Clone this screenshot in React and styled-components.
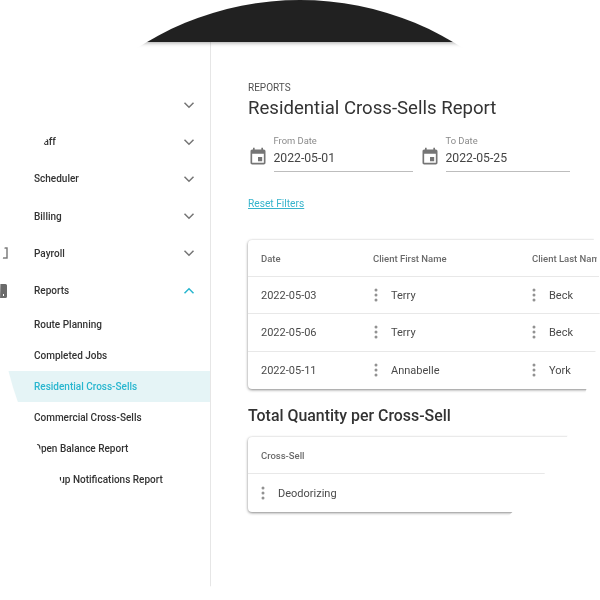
import React from "react";
import styled, { createGlobalStyle } from "styled-components";

const Global = createGlobalStyle`
  html, body { margin: 0; padding: 0; background: #fff; }
  * { box-sizing: border-box; }
  body { font-family: Roboto, "Liberation Sans", sans-serif; }
`;

const Lens = styled.div`
  width: 600px;
  height: 600px;
  overflow: hidden;
  background: #fff;
  clip-path: circle(300px at 300px 300px);
  filter: blur(0.3px);
  display: flex;
  flex-direction: column;
`;

const TopBar = styled.header`
  flex: none;
  height: 42px;
  background: #212121;
  box-shadow: 0 1px 4px rgba(0, 0, 0, 0.35);
  position: relative;
  z-index: 2;
`;

const Body = styled.div`
  flex: 1;
  display: flex;
  min-height: 0;
`;

const Sidebar = styled.nav`
  flex: none;
  width: 211px;
  border-right: 1px solid #e6e6e6;
  padding-top: 44px;
`;

const NavRow = styled.div`
  height: 37.2px;
  display: flex;
  align-items: center;
  padding-left: 34px;
  padding-right: 14px;
  font-size: 10px;
  font-weight: 500;
  color: #333;
  position: relative;
`;

const NavLabel = styled.span`
  flex: 1;
`;

const SubRow = styled.div`
  height: 31px;
  display: flex;
  align-items: center;
  padding-left: 34px;
  font-size: 10px;
  font-weight: 500;
  white-space: nowrap;
  color: ${(p) => (p.$active ? "#29b6cf" : "#333")};
  background: ${(p) => (p.$active ? "#e5f4f6" : "transparent")};
`;

const SubList = styled.div`
  padding-top: 0;
`;

const EdgeIcon = styled.svg`
  position: absolute;
  left: -11px;
  top: 50%;
  width: 18px;
  height: 18px;
  margin-top: -9px;
  overflow: visible;
  fill: ${(p) => (p.$filled ? "#6a6a6a" : "none")};
  stroke: ${(p) => (p.$filled ? "none" : "#757575")};
  stroke-width: 1.4;
`;

const Main = styled.main`
  flex: 1;
  min-width: 0;
  padding: 38px 0 0 37px;
`;

const Crumb = styled.div`
  font-size: 10px;
  line-height: 14px;
  color: #505050;
  margin-top: 0.5px;
`;

const Title = styled.h1`
  margin: 0.5px 0 0;
  font-size: 18.6px;
  line-height: 26px;
  font-weight: 400;
  color: #333;
  white-space: nowrap;
`;

const Filters = styled.div`
  display: flex;
  margin-top: 14px;
`;

const DateField = styled.div`
  display: flex;
  align-items: flex-end;
  width: ${(p) => p.$w}px;
  padding-right: ${(p) => p.$pr}px;
  flex: none;
`;

const CalIcon = styled.svg`
  flex: none;
  width: 20px;
  height: 20px;
  margin: 0 3.5px 5px 0;
  fill: #757575;
`;

const FieldBox = styled.div`
  flex: 1;
  margin-left: 2px;
  border-bottom: 1px solid #bdbdbd;
  height: 37px;
`;

const FieldLabel = styled.div`
  font-size: 9.4px;
  line-height: 13px;
  margin: -1px 0 1px;
  color: #8a8a8a;
`;

const FieldValue = styled.div`
  font-size: 12.2px;
  line-height: 20px;
  color: #444;
`;

const ResetLink = styled.a`
  display: block;
  margin-top: 25px;
  font-size: 10.2px;
  line-height: 14px;
  color: #37b4cc;
  text-decoration: underline;
`;

const Card = styled.div`
  margin-top: ${(p) => p.$mt}px;
  width: 420px;
  border-radius: 4px;
  background: #fff;
  box-shadow: 0 1px 3px rgba(0, 0, 0, 0.45), 0 0 2px rgba(0, 0, 0, 0.08);
`;

const HeadRow = styled.div`
  display: flex;
  align-items: center;
  height: 37px;
  border-bottom: 1px solid #e8e8e8;
  font-size: 9.5px;
  font-weight: 500;
  color: #6a6a6a;
`;

const Row = styled.div`
  display: flex;
  align-items: center;
  height: 37.3px;
  font-size: 11px;
  color: #4a4a4a;
  border-bottom: ${(p) => (p.$last ? "none" : "1px solid #e8e8e8")};
`;

const Cell = styled.div`
  flex: none;
  width: ${(p) => p.$w}px;
  padding-left: ${(p) => p.$pl ?? 0}px;
  display: flex;
  align-items: center;
  white-space: nowrap;
`;

const Kebab = styled.svg`
  flex: none;
  width: 4px;
  height: 14px;
  margin-right: 13px;
  margin-left: 1px;
  fill: #929292;
`;

const Section = styled.h2`
  margin: 17.5px 0 0;
  font-size: 15.9px;
  line-height: 20px;
  font-weight: 500;
  color: #333;
`;

const Chevron = ({ up }) => (
  <svg width="14" height="14" viewBox="0 0 14 14" fill="none" stroke={up ? "#29b6cf" : "#757575"} strokeWidth="1.5">
    <path d={up ? "M2.5 9.2 7 4.8l4.5 4.4" : "M2.5 4.8 7 9.2l4.5-4.4"} />
  </svg>
);

const Dots = () => (
  <Kebab viewBox="0 0 4 14">
    <circle cx="2" cy="2" r="1.5" />
    <circle cx="2" cy="7" r="1.5" />
    <circle cx="2" cy="12" r="1.5" />
  </Kebab>
);

const Calendar = () => (
  <CalIcon viewBox="0 0 24 24">
    <path d="M17 12h-5v5h5v-5zM16 1v2H8V1H6v2H5c-1.11 0-1.99.9-1.99 2L3 19c0 1.1.89 2 2 2h14c1.1 0 2-.9 2-2V5c0-1.1-.9-2-2-2h-1V1h-2zm3 18H5V8h14v11z" />
  </CalIcon>
);

const mainNav = ["Jobs", "Staff", "Scheduler", "Billing", "Payroll"];
const subNav = [
  "Route Planning",
  "Completed Jobs",
  "Residential Cross-Sells",
  "Commercial Cross-Sells",
  "Open Balance Report",
  "Start-up Notifications Report",
];
const rows = [
  ["2022-05-03", "Terry", "Beck"],
  ["2022-05-06", "Terry", "Beck"],
  ["2022-05-11", "Annabelle", "York"],
];

export default function App() {
  return (
    <>
      <Global />
      <Lens>
        <TopBar />
        <Body>
          <Sidebar>
            {mainNav.map((n) => (
              <NavRow key={n}>
                {n === "Payroll" && (
                  <EdgeIcon viewBox="0 0 18 18">
                    <rect x="1" y="4" width="17" height="10" />
                  </EdgeIcon>
                )}
                <NavLabel>{n}</NavLabel>
                <Chevron />
              </NavRow>
            ))}
            <NavRow>
              <EdgeIcon $filled viewBox="0 0 18 18">
                <path fillRule="evenodd" d="M2.5 2h14A1.5 1.5 0 0 1 18 3.5v11a1.5 1.5 0 0 1-1.5 1.5h-14A1.5 1.5 0 0 1 1 14.5v-11A1.5 1.5 0 0 1 2.5 2zM14 12v2h1v-2z" />
              </EdgeIcon>
              <NavLabel>Reports</NavLabel>
              <Chevron up />
            </NavRow>
            <SubList>
              {subNav.map((n) => (
                <SubRow key={n} $active={n === "Residential Cross-Sells"}>
                  {n}
                </SubRow>
              ))}
            </SubList>
          </Sidebar>
          <Main>
            <Crumb>REPORTS</Crumb>
            <Title>Residential Cross-Sells Report</Title>
            <Filters>
              <DateField $w={172} $pr={7}>
                <Calendar />
                <FieldBox>
                  <FieldLabel>From Date</FieldLabel>
                  <FieldValue>2022-05-01</FieldValue>
                </FieldBox>
              </DateField>
              <DateField $w={150} $pr={0}>
                <Calendar />
                <FieldBox>
                  <FieldLabel>To Date</FieldLabel>
                  <FieldValue>2022-05-25</FieldValue>
                </FieldBox>
              </DateField>
            </Filters>
            <ResetLink href="#">Reset Filters</ResetLink>
            <Card $mt={29}>
              <HeadRow>
                <Cell $w={125} $pl={13}>Date</Cell>
                <Cell $w={158}>Client First Name</Cell>
                <Cell $w={137} $pl={1}>Client Last Name</Cell>
              </HeadRow>
              {rows.map((r, i) => (
                <Row key={r[0]} $last={i === rows.length - 1}>
                  <Cell $w={125} $pl={13}>{r[0]}</Cell>
                  <Cell $w={158}><Dots />{r[1]}</Cell>
                  <Cell $w={137}><Dots />{r[2]}</Cell>
                </Row>
              ))}
            </Card>
            <Section>Total Quantity per Cross-Sell</Section>
            <Card $mt={11}>
              <HeadRow>
                <Cell $w={420} $pl={13}>Cross-Sell</Cell>
              </HeadRow>
              <Row $last>
                <Cell $w={420} $pl={12}><Dots />Deodorizing</Cell>
              </Row>
            </Card>
          </Main>
        </Body>
      </Lens>
    </>
  );
}
